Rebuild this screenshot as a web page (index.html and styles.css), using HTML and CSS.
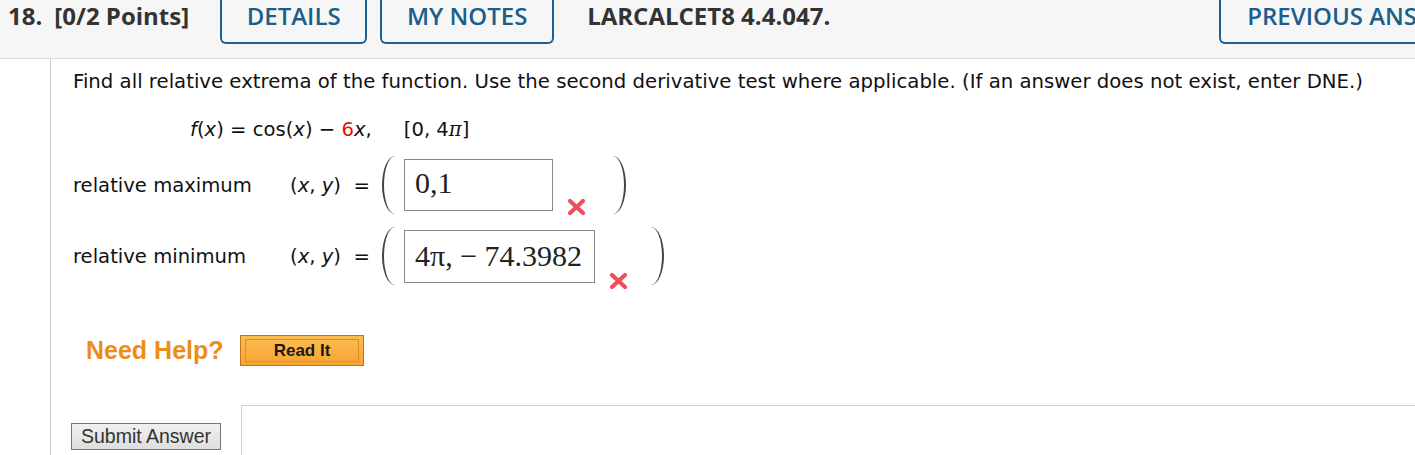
FILE: index.html
```html
<!DOCTYPE html>
<html>
<head>
<meta charset="utf-8">
<link rel="stylesheet" href="styles.css">
</head>
<body>
<div class="header">
  <span class="qnum">18.</span>
  <span class="points">[0/2 Points]</span>
  <span class="tab tab-details">DETAILS</span>
  <span class="tab tab-notes">MY NOTES</span>
  <span class="code">LARCALCET8 4.4.047.</span>
  <span class="tab tab-prev">PREVIOUS ANSWERS</span>
</div>
<div class="main">
  <div class="gutter"></div>
  <div class="content">
    <p class="question">Find all relative extrema of the function. Use the second derivative test where applicable. (If an answer does not exist, enter DNE.)</p>
    <p class="formula"><i>f</i>(<i>x</i>) = cos(<i>x</i>) &minus; <span class="red">6</span><i>x</i>,<span class="interval">[0, 4<span class="pi">&pi;</span>]</span></p>
    <div class="answers">
      <div class="row row-max">
        <span class="label">relative maximum</span>
        <span class="xy">(<i>x</i>, <i>y</i>)&nbsp; =</span>
        <span class="paren paren-l"></span>
        <span class="box box-max">0,1</span>
        <svg class="wrong" width="19" height="18" viewBox="0 0 19 18"><path d="M3 3 L16 15 M16 3 L3 15" stroke="#ee4f58" stroke-width="4.2" stroke-linecap="round" fill="none"/></svg>
        <span class="paren paren-r"></span>
      </div>
      <div class="row row-min">
        <span class="label">relative minimum</span>
        <span class="xy">(<i>x</i>, <i>y</i>)&nbsp; =</span>
        <span class="paren paren-l"></span>
        <span class="box box-min">4&pi;, &minus; 74.3982</span>
        <svg class="wrong" width="19" height="18" viewBox="0 0 19 18"><path d="M3 3 L16 15 M16 3 L3 15" stroke="#ee4f58" stroke-width="4.2" stroke-linecap="round" fill="none"/></svg>
        <span class="paren paren-r"></span>
      </div>
    </div>
    <div class="help">
      <span class="need">Need Help?</span>
      <span class="readit"><span class="readit-inner">Read It</span></span>
    </div>
    <div class="footer">
      <button class="submit">Submit Answer</button>
      <div class="panel"></div>
    </div>
  </div>
</div>
</body>
</html>
```
FILE: styles.css
```css
html, body {
  margin: 0;
  padding: 0;
  background: #ffffff;
  overflow: hidden;
}
body {
  width: 1415px;
  height: 455px;
  font-family: "DejaVu Sans", Verdana, sans-serif;
  color: #111;
}
.header {
  display: flex;
  align-items: flex-start;
  height: 58px;
  background: #f6f6f6;
  border-bottom: 1px solid #dcdcdc;
  overflow: hidden;
  font-family: "Open Sans", sans-serif;
  font-size: 24px;
  white-space: nowrap;
}
.qnum, .points, .code {
  line-height: 32px;
  font-weight: 700;
  color: #333;
  flex-shrink: 0;
}
.qnum { margin-left: 8px; }
.points { margin-left: 12px; }
.tab {
  flex-shrink: 0;
  box-sizing: border-box;
  height: 44px;
  line-height: 32px;
  border: 2px solid #1c6192;
  border-top: none;
  border-radius: 0 0 6px 6px;
  color: #1b5e8c;
  font-weight: 600;
  text-align: center;
}
.tab-details { margin-left: 31px; width: 147px; }
.tab-notes { margin-left: 13px; width: 174px; }
.code { margin-left: 33px; }
.tab-prev { margin-left: 389px; width: 280px; text-align: left; padding-left: 26px; }

.main {
  display: flex;
  height: 396px;
  overflow: hidden;
}
.gutter {
  width: 50px;
  flex-shrink: 0;
  border-right: 1px solid #cfcfcf;
}
.content {
  padding-left: 22px;
  flex: 1;
}
.question {
  margin: 12px 0 0 0;
  font-size: 19.7px;
  line-height: 22px;
  white-space: nowrap;
}
.formula {
  margin: 26px 0 0 117px;
  font-size: 19.6px;
  line-height: 22px;
  white-space: nowrap;
}
.red { color: #e0120f; }
.interval { margin-left: 32px; }
.pi { font-family: "DejaVu Serif", serif; font-style: italic; }

.answers {
  margin-top: 14px;
  display: flex;
  flex-direction: column;
  gap: 11px;
}
.row {
  display: flex;
  align-items: center;
  height: 60px;
}
.label {
  width: 217px;
  font-size: 19.6px;
}
.xy {
  width: 90px;
  font-size: 19.6px;
}
.paren {
  display: block;
  box-sizing: border-box;
  width: 13px;
  height: 58px;
  border-color: #444;
  border-style: solid;
  border-width: 0;
}
.paren-l {
  border-left-width: 2.5px;
  border-radius: 100% 0 0 100% / 50% 0 0 50%;
  margin-left: 2px;
}
.paren-r {
  border-right-width: 2.5px;
  border-radius: 0 100% 100% 0 / 0 50% 50% 0;
}
.box {
  box-sizing: border-box;
  margin-left: 9px;
  border: 1px solid #8a8a8a;
  background: #fff;
  font-family: "Liberation Serif", "DejaVu Serif", serif;
  font-size: 30px;
  color: #222;
  padding-left: 10px;
  white-space: nowrap;
}
.box-max { width: 149px; height: 52px; line-height: 46px; }
.box-min { width: 191px; height: 53px; line-height: 50px; }
.wrong {
  align-self: flex-end;
  margin-left: 14px;
}
.row-max .wrong { margin-bottom: -1px; }
.row-max .paren-r { margin-left: 27px; }
.row-min .wrong { margin-bottom: -4px; }
.row-min .paren-r { margin-left: 23px; }

.help {
  display: flex;
  align-items: center;
  margin-top: 49px;
  margin-left: 13px;
  height: 31px;
}
.need {
  font-family: "Liberation Sans", Arial, sans-serif;
  font-weight: 700;
  font-size: 25px;
  color: #ee8c1a;
  width: 154px;
}
.readit {
  box-sizing: border-box;
  width: 124px;
  height: 31px;
  border: 1px solid #c0741c;
  background: linear-gradient(#fcbc52, #f7a531);
  padding: 3px 4px;
  display: flex;
}
.readit-inner {
  flex: 1;
  border: 1px solid #dc8d24;
  text-align: center;
  font-family: "Liberation Sans", Arial, sans-serif;
  font-weight: 700;
  font-size: 17px;
  line-height: 21px;
  color: #1a1a1a;
}

.footer {
  display: flex;
  align-items: flex-start;
  margin-top: 39px;
}
.submit {
  margin: 18px 0 0 -2px;
  box-sizing: border-box;
  width: 150px;
  height: 27px;
  padding: 0;
  border: 1px solid #767676;
  border-radius: 0;
  background: linear-gradient(#f0f0f0, #dedede);
  font-family: "Liberation Sans", Arial, sans-serif;
  font-size: 19.5px;
  line-height: 25px;
  color: #333;
}
.panel {
  flex: 1;
  margin-left: 20px;
  height: 50px;
  border-top: 1px solid #cfcfcf;
  border-left: 1px solid #cfcfcf;
}
```
